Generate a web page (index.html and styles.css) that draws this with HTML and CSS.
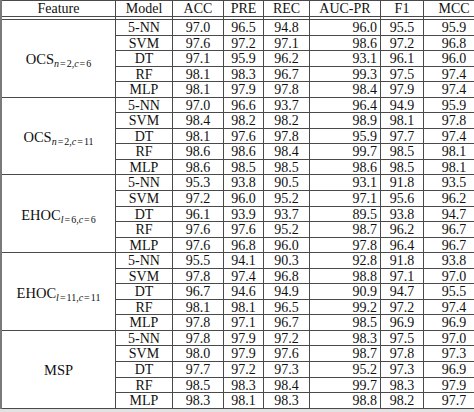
FILE: index.html
```html
<!DOCTYPE html>
<html>
<head>
<meta charset="utf-8">
<link rel="stylesheet" href="styles.css">
</head>
<body>
<div class="page">
<div class="results">
  <div class="th">Feature</div><div class="th">Model</div><div class="th">ACC</div><div class="th">PRE</div><div class="th">REC</div><div class="th">AUC-PR</div><div class="th">F1</div><div class="th">MCC</div>
  <div class="gap"></div><div class="gap"></div><div class="gap"></div><div class="gap"></div><div class="gap"></div><div class="gap"></div><div class="gap"></div><div class="gap"></div>

  <div class="feat"><span class="lbl">OCS<sub><i>n</i><span class="eq">=</span>2,<i>c</i><span class="eq">=</span>6</sub></span></div>
  <div class="td">5-NN</div><div class="td">97.0</div><div class="td">96.5</div><div class="td">94.8</div><div class="td auc">96.0</div><div class="td">95.5</div><div class="td">95.9</div>
  <div class="td">SVM</div><div class="td">97.6</div><div class="td">97.2</div><div class="td">97.1</div><div class="td auc">98.6</div><div class="td">97.2</div><div class="td">96.8</div>
  <div class="td">DT</div><div class="td">97.1</div><div class="td">95.9</div><div class="td">96.2</div><div class="td auc">93.1</div><div class="td">96.1</div><div class="td">96.0</div>
  <div class="td">RF</div><div class="td">98.1</div><div class="td">98.3</div><div class="td">96.7</div><div class="td auc">99.3</div><div class="td">97.5</div><div class="td">97.4</div>
  <div class="td">MLP</div><div class="td">98.1</div><div class="td">97.9</div><div class="td">97.8</div><div class="td auc">98.4</div><div class="td">97.9</div><div class="td">97.4</div>

  <div class="feat"><span class="lbl">OCS<sub><i>n</i><span class="eq">=</span>2,<i>c</i><span class="eq">=</span>11</sub></span></div>
  <div class="td">5-NN</div><div class="td">97.0</div><div class="td">96.6</div><div class="td">93.7</div><div class="td auc">96.4</div><div class="td">94.9</div><div class="td">95.9</div>
  <div class="td">SVM</div><div class="td">98.4</div><div class="td">98.2</div><div class="td">98.2</div><div class="td auc">98.9</div><div class="td">98.1</div><div class="td">97.8</div>
  <div class="td">DT</div><div class="td">98.1</div><div class="td">97.6</div><div class="td">97.8</div><div class="td auc">95.9</div><div class="td">97.7</div><div class="td">97.4</div>
  <div class="td">RF</div><div class="td">98.6</div><div class="td">98.6</div><div class="td">98.4</div><div class="td auc">99.7</div><div class="td">98.5</div><div class="td">98.1</div>
  <div class="td">MLP</div><div class="td">98.6</div><div class="td">98.5</div><div class="td">98.5</div><div class="td auc">98.6</div><div class="td">98.5</div><div class="td">98.1</div>

  <div class="feat"><span class="lbl">EHOC<sub><i>l</i><span class="eq">=</span>6,<i>c</i><span class="eq">=</span>6</sub></span></div>
  <div class="td">5-NN</div><div class="td">95.3</div><div class="td">93.8</div><div class="td">90.5</div><div class="td auc">93.1</div><div class="td">91.8</div><div class="td">93.5</div>
  <div class="td">SVM</div><div class="td">97.2</div><div class="td">96.0</div><div class="td">95.2</div><div class="td auc">97.1</div><div class="td">95.6</div><div class="td">96.2</div>
  <div class="td">DT</div><div class="td">96.1</div><div class="td">93.9</div><div class="td">93.7</div><div class="td auc">89.5</div><div class="td">93.8</div><div class="td">94.7</div>
  <div class="td">RF</div><div class="td">97.6</div><div class="td">97.6</div><div class="td">95.2</div><div class="td auc">98.7</div><div class="td">96.2</div><div class="td">96.7</div>
  <div class="td">MLP</div><div class="td">97.6</div><div class="td">96.8</div><div class="td">96.0</div><div class="td auc">97.8</div><div class="td">96.4</div><div class="td">96.7</div>

  <div class="feat"><span class="lbl">EHOC<sub><i>l</i><span class="eq">=</span>11,<i>c</i><span class="eq">=</span>11</sub></span></div>
  <div class="td">5-NN</div><div class="td">95.5</div><div class="td">94.1</div><div class="td">90.3</div><div class="td auc">92.8</div><div class="td">91.8</div><div class="td">93.8</div>
  <div class="td">SVM</div><div class="td">97.8</div><div class="td">97.4</div><div class="td">96.8</div><div class="td auc">98.8</div><div class="td">97.1</div><div class="td">97.0</div>
  <div class="td">DT</div><div class="td">96.7</div><div class="td">94.6</div><div class="td">94.9</div><div class="td auc">90.9</div><div class="td">94.7</div><div class="td">95.5</div>
  <div class="td">RF</div><div class="td">98.1</div><div class="td">98.1</div><div class="td">96.5</div><div class="td auc">99.2</div><div class="td">97.2</div><div class="td">97.4</div>
  <div class="td">MLP</div><div class="td">97.8</div><div class="td">97.1</div><div class="td">96.7</div><div class="td auc">98.5</div><div class="td">96.9</div><div class="td">96.9</div>

  <div class="feat"><span class="lbl">MSP</span></div>
  <div class="td">5-NN</div><div class="td">97.8</div><div class="td">97.9</div><div class="td">97.2</div><div class="td auc">98.3</div><div class="td">97.5</div><div class="td">97.0</div>
  <div class="td">SVM</div><div class="td">98.0</div><div class="td">97.9</div><div class="td">97.6</div><div class="td auc">98.7</div><div class="td">97.8</div><div class="td">97.3</div>
  <div class="td">DT</div><div class="td">97.7</div><div class="td">97.2</div><div class="td">97.3</div><div class="td auc">95.2</div><div class="td">97.3</div><div class="td">96.9</div>
  <div class="td">RF</div><div class="td">98.5</div><div class="td">98.3</div><div class="td">98.4</div><div class="td auc">99.7</div><div class="td">98.3</div><div class="td">97.9</div>
  <div class="td">MLP</div><div class="td">98.3</div><div class="td">98.1</div><div class="td">98.3</div><div class="td auc">98.8</div><div class="td">98.2</div><div class="td">97.7</div>
</div>
</div>
</body>
</html>
```
FILE: styles.css
```css
html, body {
  margin: 0;
  padding: 0;
  background: #e2e2e2;
}
.page {
  width: 474px;
  height: 412px;
  overflow: hidden;
  background: #e2e2e2;
}
.results {
  display: grid;
  grid-template-columns: 113px 56px 50px 39px 45px 70px 42px 60px;
  grid-template-rows: 15px 2px repeat(25, 14.56px);
  gap: 1px;
  padding: 1px 0 1px 0;
  width: max-content;
  background: #4a4a4a;
  border-left: 2px solid #7a7a7a;
  font-family: "Liberation Serif", "Times New Roman", serif;
  font-size: 14px;
  color: #111;
}
.th, .td, .gap, .feat {
  background: #fff;
  white-space: nowrap;
  text-align: center;
}
.th {
  line-height: 15px;
}
.td {
  line-height: 14.56px;
  padding-top: 1px;
  height: 14.56px;
  box-sizing: border-box;
  overflow: visible;
}
.td.auc {
  text-align: right;
  padding-right: 3px;
}
.feat {
  grid-column: 1;
  grid-row: span 5;
  display: flex;
  align-items: center;
  justify-content: center;
  padding-top: 2px;
}
.lbl {
  font-size: 14.5px;
  line-height: 16px;
}
.lbl sub {
  font-size: 10px;
  vertical-align: -3px;
  line-height: 0;
}
.lbl sub .eq { padding: 0 1px; }
```
